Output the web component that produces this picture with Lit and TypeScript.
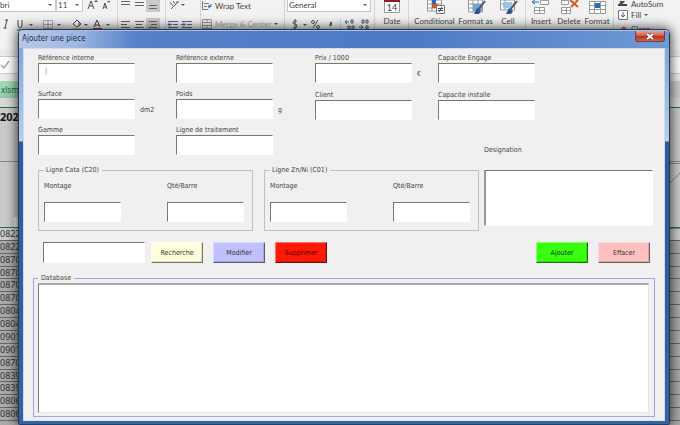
import { LitElement, html, css, svg, nothing } from "lit";
import { customElement, property } from "lit/decorators.js";

const ROWS = ["0822", "0822", "0870", "0870", "0870", "0870", "0804", "0804", "0901", "0901", "0870", "0839", "0839", "0806", "0806"];

@customElement("excel-ribbon")
class ExcelRibbon extends LitElement {
  static styles = css`
    :host { display: flex; height: 50px; background: #f2f2f2; color: #444; font: 8px/12px Lato, "Noto Sans", sans-serif; overflow: hidden; white-space: nowrap; }
    .group { flex: none; box-sizing: border-box; height: 50px; }
    .ruled { border-left: 1px solid #d4d4d4; }
    .row { display: flex; align-items: center; height: 12px; }
    .second { margin-top: 6px; }
    .font { width: 117px; }
    .align { width: 83px; }
    .wrap { width: 84px; }
    .number { width: 90px; }
    .date { width: 34px; }
    .styles { width: 117px; padding-left: 5px; }
    .cells { width: 88px; padding-left: 1px; }
    .editing { flex: 1; padding-left: 4px; }
    .box { box-sizing: border-box; display: flex; justify-content: space-between; align-items: center; height: 12px; background: #fff; border: 1px solid #c8c8c8; border-top: 0; padding: 0 3px 2px 1px; }
    .name { width: 56px; padding-left: 0; border-left: 0; }
    .size { width: 27px; }
    .general { width: 84px; margin-left: 2px; }
    .arrow { width: 0; height: 0; border: 2px solid transparent; border-top-color: #555; border-bottom: 0; }
    .wrap .row { gap: 3px; padding-left: 1px; }
    .muted { color: #aaa; }
    .big { display: flex; }
    .tool { display: flex; flex-direction: column; align-items: center; }
    .date .tool { width: 34px; }
    .styles .tool { width: 41px; }
    .styles .tool + .tool + .tool { width: 24px; }
    .cells .tool { width: 28px; }
    .tool svg { height: 15px; }
    svg { display: block; flex: none; }
    .editing .row { gap: 3px; height: 14px; }
    .editing .first { height: 8px; gap: 3px; }
  `;

  tool(label: string, icon: unknown) {
    return html`<div class="tool"><svg width="22" height="15" viewBox="0 0 22 15" fill="none">${icon}</svg><span>${label}</span></div>`;
  }

  render() {
    return html`
      <div class="group font">
        <div class="row">
          <div class="box name"><span>bri</span><i class="arrow"></i></div>
          <div class="box size"><span>11</span><i class="arrow"></i></div>
          <svg width="32" height="12" viewBox="0 0 32 12" fill="none" stroke="#555">
            <path d="M5 9 8 1l3 8M6 6h4M20 9l2-6 2 6M21 7h3" />
            <path d="m11 2 2-2 2 2zM24 1h3l-1 2z" fill="#2b579a" stroke="none" />
          </svg>
        </div>
        <div class="row second">
          <svg width="114" height="13" viewBox="0 0 114 13" fill="none" stroke="#444">
            <path d="M5 2h3M3.500 10h3M7 2 5 10M18 2v5q0 3 2 3t2-3V2M17 12h7" />
            <path d="M43.500 2.500h9v8h-9zM48 2v9M43 6.500h9" stroke="#aaa" />
            <path d="m29 6 2 2 2-2zM57 6l2 2 2-2zM84 6l2 2 2-2zM106 6l2 2 2-2z" fill="#555" stroke="none" />
            <path d="m73 6 4-4 4 4-4 3z" fill="#fff" /><path d="M79 4v4" stroke="#2b579a" />
            <path d="M72 10h9v3h-9z" fill="#dedb45" stroke="none" />
            <path d="m94 9 3-7 3 7M95 7h4" /><path d="M93 10h9v3h-9z" fill="#c32727" stroke="none" />
          </svg>
        </div>
      </div>
      <div class="group ruled align">
        <svg width="82" height="31" viewBox="0 0 82 31" fill="none" stroke="#666">
          <path d="M28 0h14v12H28zM28 18h14v13H28z" fill="#c9c9c9" stroke="none" />
          <path d="M3 1.500h9M3 4.500h9M17 2.500h9M17 5.500h9M31 5.500h8M31 8.500h8M3 21.500h9M3 24.500h6M3 27.500h9M17 21.500h9M18 24.500h6M17 27.500h9M31 21.500h8M33 24.500h6M31 27.500h8" />
          <path d="M47.500 0v31" stroke="#d4d4d4" />
          <path d="m52 2 3 4m0-5 3 4m-5 4 7-7m-2 0h3" /><path d="m63 4 2 2 2-2z" fill="#555" stroke="none" />
          <path d="M50 21.500h10M55 24.500h5M50 27.500h10M64 21.500h10M69 24.500h5M64 27.500h10" />
          <path d="M54 24.500h-4l2-2m-2 2 2 2M63 24.500h4l-2-2m2 2-2 2" stroke="#2b6cb0" />
        </svg>
      </div>
      <div class="group ruled wrap">
        <div class="row">
          <svg width="10" height="10" viewBox="0 0 10 10" fill="none" stroke="#777"><path d="M.5 0v8.500h6M2 2.500h5M2 5.500h3" /><path d="M6 5.500h3V3M8 4 6 5.500 8 7" stroke="#2b6cb0" /></svg>
          <span>Wrap Text</span>
        </div>
        <div class="row second muted">
          <svg width="10" height="10" viewBox="0 0 10 10" fill="none" stroke="#999"><path d="M.5.5h9v9h-9zM0 3.500h9M0 6.500h9M5 0v3M5 7v3" /></svg>
          <span>Merge &amp; Center</span><i class="arrow"></i>
        </div>
      </div>
      <div class="group ruled number">
        <div class="row"><div class="box general"><span>General</span><i class="arrow"></i></div></div>
        <div class="row second">
          <svg width="88" height="13" viewBox="0 0 88 13" fill="none" stroke="#555">
            <path d="M12 3H9q-2 2 0 3h2q2 2 0 4H8M10 1v11M33 2l-5 8" /><circle cx="28" cy="4" r="1.500" /><circle cx="33" cy="9" r="1.500" />
            <path d="m18 6 2 2 2-2z" fill="#555" stroke="none" /><path d="M46 4v2l-1 2" stroke-width="2" />
            <path d="M55.500 0v13" stroke="#d4d4d4" />
            <path d="M66 2h2v3h-2zM63 8h2v3h-2zM67 8h2v3h-2zM77 2h2v3h-2zM81 2h2v3h-2zM81 8h2v3h-2z" />
            <path d="M64 4h-4l2-2m-2 2 2 2M74 9h4l-2-2m2 2-2 2" stroke="#2b6cb0" />
          </svg>
        </div>
      </div>
      <div class="group ruled date">
        <div class="tool">
          <svg width="16" height="15" viewBox="0 0 16 15"><path d="M.5 0h15v12.500H.5z" fill="#fff" stroke="#999" /><path d="M0 0h16v2H0z" fill="#8b1f24" /><text x="8" y="10.500" text-anchor="middle" font-size="9" fill="#444">14</text></svg>
          <span>Date</span>
        </div>
      </div>
      <div class="group ruled styles big">
        ${this.tool("Conditional", svg`<path d="M3.500 0h14v11h-14zM3 4h14M3 8h14M8 0v11" fill="#fff" stroke="#999"/><path d="M8 0h4v4H8z" fill="#2b6cb0"/><path d="M8 4h6v4H8z" fill="#d9532c"/><path d="M12.500 5.500h8v8h-8z" fill="#fff" stroke="#777"/><path d="M14 8.500h5M14 10.500h5M18 7l-3 5" stroke="#444"/>`)}
        ${this.tool("Format as", svg`<path d="M3.500 0h14v12h-14zM3 4h14M3 8h14M8 0v12M13 0v12" fill="#fff" stroke="#999"/><path d="M8 4h9v7H8z" fill="#6ea3d8"/><path d="m20 1-7 9" stroke="#555" stroke-width="2"/><path d="m9 14 3-6 4 3-2 3z" fill="#2b579a"/>`)}
        ${this.tool("Cell", svg`<path d="M3.500 0h14v10h-14zM3 4h14M8 0v10" fill="#fff" stroke="#999"/><path d="M6 2h9v6H6z" fill="#9bc3e8"/><path d="m20 1-7 9" stroke="#555" stroke-width="2"/><path d="m9 14 3-6 4 3-2 3z" fill="#2b579a"/>`)}
      </div>
      <div class="group ruled cells big">
        ${this.tool("Insert", svg`<path d="M4.500 7.500h10v6h-10zM4 10.500h10M9.500 7v6M10.500 .5h8v4h-8z" fill="#fff" stroke="#999"/><path d="M9 2H2l3-2M2 2l3 2" stroke="#2b6cb0"/>`)}
        ${this.tool("Delete", svg`<path d="M3.500 7.500h9v6h-9zM3 10.500h9M8.500 7v6M3.500 .5h7v4h-7z" fill="#fff" stroke="#999"/><path d="m12 0 8 7M20 0l-7 7" stroke="#d9532c" stroke-width="2"/>`)}
        ${this.tool("Format", svg`<path d="M3.500 1.500h16v12h-16zM3 5.500h16M3 9.500h16M8.500 1v13M14.500 1v13" fill="#fff" stroke="#999"/><path d="M9 3h5v5H9z" fill="#2b6cb0"/>`)}
      </div>
      <div class="group ruled editing">
        <div class="row first">
          <svg width="10" height="6" viewBox="0 0 10 6" fill="none" stroke="#444" stroke-width="2"><path d="m2 0 3 1-4 3h8" /></svg>
          <span>AutoSum</span>
        </div>
        <div class="row">
          <svg width="10" height="10" viewBox="0 0 10 10" fill="none"><path d="M.5.5h9v9h-9z" fill="#fff" stroke="#777" /><path d="M5 2v5M3 5l2 2 2-2" stroke="#2b6cb0" /></svg>
          <span>Fill</span><i class="arrow"></i>
        </div>
        <div class="row">
          <svg width="10" height="8" viewBox="0 0 10 8"><path d="m1 5 5-4 3 3-4 4H3z" fill="#d56a7f" /></svg>
          <span>Clear</span>
        </div>
      </div>
    `;
  }
}

@customElement("text-field")
class TextField extends LitElement {
  @property() label = "";
  @property() unit = "";
  @property() value = "";
  static styles = css`
    :host { display: block; color: #454540; font: 7px/10px "DejaVu Sans Condensed", "Noto Sans", sans-serif; white-space: nowrap; }
    label { display: block; height: 10px; margin-bottom: var(--label-gap, 0); }
    .line { display: flex; align-items: center; gap: 5px; }
    .input { box-sizing: border-box; width: var(--field-width, 97px); height: 20px; border: 1px solid #fff; border-top-color: #777; border-left-color: #777; border-radius: 0; padding: 0 0 4px 6px; background: #fff; color: #777; font: inherit; outline: 0; }
    .unit { padding-top: 2px; }
  `;
  render() {
    return html`<label for="input">${this.label}</label>
      <div class="line"><input class="input" id="input" .value=${this.value} />${this.unit ? html`<span class="unit">${this.unit}</span>` : nothing}</div>`;
  }
}

@customElement("app-root")
class AppRoot extends LitElement {
  static styles = css`
    :host { display: block; position: relative; min-height: 100vh; overflow: hidden; background: #cbcbcb; color: #454540; font: 7px/10px "DejaVu Sans Condensed", "Noto Sans", sans-serif; white-space: nowrap; }
    .book { position: absolute; inset: 0; display: flex; flex-direction: column; }
    .book > * { flex: none; }
    .formula { height: 16px; margin-top: 6px; border: 1px solid #ccc; border-width: 1px 0; background: #fff; }
    .chrome { background: #ececec; padding-bottom: 7px; display: flow-root; }
    .tab { width: 24px; height: 17px; box-sizing: border-box; padding: 3px 0 0 1px; background: linear-gradient(#a0dcba, #8fcca9); color: #285c3e; font: 8px/11px "Noto Sans", sans-serif; }
    .heading { height: 9px; border-bottom: 1px solid #217346; background: #d8d8d8; }
    .title { height: 53px; border-bottom: 1px solid #888; color: #111; font: bold 11px/18px "Noto Sans", sans-serif; }
    .blank { height: 55px; }
    .filter { height: 10px; border-bottom: 1px solid #217346; display: flex; }
    .filter i { width: 10px; margin-left: 14px; background: #eee; }
    .book > .rows { flex: 1 1 0; min-height: 0; display: grid; grid-auto-rows: minmax(0, 1fr); padding-bottom: 4px; background: #aaa; color: #333; font: 9px/12px "Noto Sans", sans-serif; }
    .cell { box-sizing: border-box; border-bottom: 1px solid #666; overflow: hidden; }
    .cell:first-child { background: #ccc; }
    .edge { position: absolute; right: 0; top: 163px; }
    .dialog { position: absolute; inset: 29px 10px 0 18px; box-sizing: border-box; display: flex; flex-direction: column; padding: 0 4px 3px; border: 1px solid #26384f; border-bottom-color: #1c3f77; border-radius: 5px 5px 2px 2px; background: linear-gradient(#83a5db 19px, #b6cdec 110px, #b6cdec 111px, #2b5a9f 112px, #34639f); box-shadow: 0 0 12px 1px #000b; }
    .bar { display: flex; justify-content: space-between; height: 18px; margin: 0 -4px; padding-left: 3px; border-radius: 4px 4px 0 0; background: linear-gradient(90deg, #b7c9e8, #9db7e3 9%, #5580c8 18%, #4c7ac4 60%, #6f99d5); box-shadow: inset 0 1px #a8c0e6; }
    .caption { color: #1f2a3c; font: 8px/18px "DejaVu Sans Condensed", "Noto Sans", sans-serif; }
    .close { display: grid; place-items: center; width: 30px; height: 11px; margin: 1px 4px 0 0; padding: 0; border: 1px solid #7b3b3b; border-top: 0; border-radius: 0 0 3px 3px; background: linear-gradient(#e6a196, #cf5f50 45%, #b52c1c 50%, #d4604c); }
    .client { flex: 1; display: flex; flex-direction: column; background: #f0f0f0; border: 1px solid #cddcf0; border-bottom-color: #dce8f5; padding: 4px 9px 3px; }
    .fields { display: grid; grid-template-columns: 138px 139px 123px 97px; padding-left: 5px; }
    .column { display: flex; flex-direction: column; gap: 6px; }
    .loose { gap: 7px; }
    .middle { display: flex; gap: 11px; margin-top: -10px; padding-left: 5px; }
    .lines { display: flex; gap: 11px; padding-top: 20px; }
    fieldset { box-sizing: border-box; min-width: 0; margin: 0; border: 1px solid #bfc0bd; }
    legend { padding: 0 3px; line-height: 10px; }
    .line { display: flex; gap: 46px; width: 215px; height: 66px; padding: 6px 5px 0; --field-width: 77px; --label-gap: 11px; }
    .line legend { padding: 0 3px 0 2px; }
    .designation { flex: 1; margin-left: -6px; padding-right: 2px; }
    .designation label { display: block; margin-bottom: 15px; }
    .area { display: block; box-sizing: border-box; width: 100%; height: 56px; resize: none; margin: 0; border: 1px solid #fff; border-top-color: #777; border-left: 2px solid #999; background: #fff; font: inherit; outline: 0; border-radius: 0; }
    .actions { display: flex; align-items: center; gap: 10px; padding: 11px 5px 0 10px; }
    .search { box-sizing: border-box; width: 102px; height: 21px; margin-right: -4px; border: 1px solid #fff; border-top-color: #777; border-left-color: #777; background: #fff; font: inherit; outline: 0; }
    .button { box-sizing: border-box; width: 52px; height: 21px; padding: 0; border: 1px solid #fff6; border-right-color: #0008; border-bottom-color: #0008; color: #333; font: inherit; box-shadow: inset -1px -1px #0002; }
    .find { background: #ffffde; }
    .modify { background: #c0c0ff; }
    .remove { background: #ff1a08; color: #500; }
    .add { background: #38ff10; color: #064006; margin-left: auto; }
    .clear { background: #ffc0c0; }
    .database { flex: 1; display: flex; margin-top: 10px; padding: 0 5px 3px 4px; border: 1px solid #a0a0ee; }
    .list { flex: 1; box-sizing: border-box; border: 1px solid #e6e6e6; border-top: 2px solid #aaa; border-left: 1px solid #777; background: #fff; }
  `;

  line(title: string) {
    return html`<fieldset class="line"><legend>${title}</legend><text-field label="Montage"></text-field><text-field label="Qté/Barre"></text-field></fieldset>`;
  }

  render() {
    return html`
      <div class="book">
        <excel-ribbon></excel-ribbon>
        <div class="chrome"><div class="formula"><svg width="14" height="14" viewBox="0 0 14 14" fill="none" stroke="#aaa" stroke-width="1.500"><path d="m1 8 3 3 5-7" /></svg></div></div>
        <div class="tab">xlsm</div>
        <div class="heading"></div>
        <div class="title">202</div>
        <div class="blank"></div>
        <div class="filter"><i></i></div>
        <div class="rows">${ROWS.map((r) => html`<div class="cell">${r}</div>`)}</div>
        <svg class="edge" width="12" height="66" fill="none" stroke="#888"><path d="M0 .5h12M0 22 12 10M0 65.500h12" /></svg>
      </div>
      <section class="dialog">
        <div class="bar">
          <span class="caption">Ajouter une piece</span>
          <button class="close" aria-label="Fermer"><svg width="8" height="7" viewBox="0 0 8 7"><path d="m1 1 6 5M7 1 1 6" stroke="#5b3030" stroke-width="3" /><path d="m1 1 6 5M7 1 1 6" stroke="#fff" stroke-width="2" /></svg></button>
        </div>
        <div class="client">
          <div class="fields">
            <div class="column">
              <text-field label="Référence interne" value="|"></text-field>
              <text-field label="Surface" unit="dm2"></text-field>
              <text-field label="Gamme"></text-field>
            </div>
            <div class="column">
              <text-field label="Référence externe"></text-field>
              <text-field label="Poids" unit="g"></text-field>
              <text-field label="Ligne de traitement"></text-field>
            </div>
            <div class="column loose">
              <text-field label="Prix / 1000" unit="€"></text-field>
              <text-field label="Client"></text-field>
            </div>
            <div class="column loose">
              <text-field label="Capacite Engage"></text-field>
              <text-field label="Capacite installe"></text-field>
            </div>
          </div>
          <div class="middle">
            <div class="lines">${this.line("Ligne Cata (C20)")}${this.line("Ligne Zn/Ni (C01)")}</div>
            <div class="designation"><label for="designation">Designation</label><textarea class="area" id="designation"></textarea></div>
          </div>
          <div class="actions">
            <input class="search" aria-label="Recherche" />
            <button class="button find">Recherche</button>
            <button class="button modify">Modifier</button>
            <button class="button remove">Supprimer</button>
            <button class="button add">Ajouter</button>
            <button class="button clear">Effacer</button>
          </div>
          <fieldset class="database"><legend>Database</legend><div class="list"></div></fieldset>
        </div>
      </section>
    `;
  }
}
